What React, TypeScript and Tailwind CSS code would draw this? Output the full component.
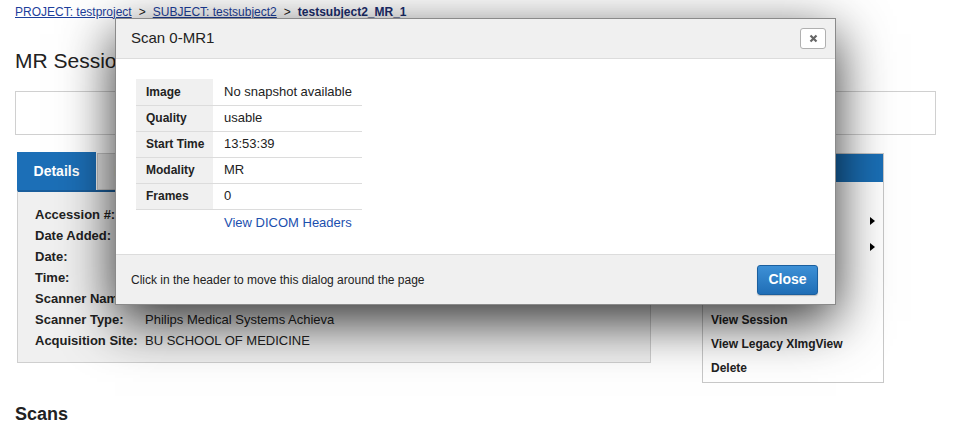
import React from 'react';

const font = { fontFamily: '"Liberation Sans", Arial, sans-serif' };

const scanRows: [string, string][] = [
  ['Image', 'No snapshot available'],
  ['Quality', 'usable'],
  ['Start Time', '13:53:39'],
  ['Modality', 'MR'],
  ['Frames', '0'],
];

const details: [string, string][] = [
  ['Accession #:', 'E00012'],
  ['Date Added:', '2019-05-02 13:53:39'],
  ['Date:', '2019-04-30'],
  ['Time:', '13:53:39'],
  ['Scanner Name:', 'MR1'],
  ['Scanner Type:', 'Philips Medical Systems Achieva'],
  ['Acquisition Site:', 'BU SCHOOL OF MEDICINE'],
];

function Arrow() {
  return (
    <svg width="5" height="8" viewBox="0 0 5 8" className="fill-black">
      <path d="M0 0 L5 4 L0 8 Z" />
    </svg>
  );
}

function ActionBox() {
  return (
    <div className="w-[182px] border border-[#c8c8c8] bg-white">
      <div className="h-[28px] bg-[#1a6fb6]" />
      <ul className="pb-[2px] text-[12px] font-bold text-[#222]">
        <li className="flex h-[26px] items-center justify-between px-[8px]">Actions</li>
        <li className="flex h-[26px] items-center justify-between px-[8px]">
          Edit <Arrow />
        </li>
        <li className="flex h-[26px] items-center justify-between px-[8px]">
          Download <Arrow />
        </li>
        <li className="flex h-[24px] items-center px-[8px]">Upload Images</li>
        <li className="flex h-[24px] items-center px-[8px]">Run Pipeline</li>
        <li className="flex h-[24px] items-center px-[8px]">View Session</li>
        <li className="flex h-[24px] items-center px-[8px]">View Legacy XImgView</li>
        <li className="flex h-[24px] items-center px-[8px]">Delete</li>
      </ul>
    </div>
  );
}

function ScanDialog() {
  return (
    <div className="absolute left-[115px] top-[18px] flex h-[287px] w-[721px] flex-col border border-[#8a8a8a] bg-white shadow-[0_16px_50px_rgba(0,0,0,0.8)]">
      <div className="flex h-[40px] items-center justify-between border-b border-[#dcdcdc] bg-[#f0f0f0] pl-[15px] pr-[9px]">
        <span className="text-[15px] text-[#222]">Scan 0-MR1</span>
        <button className="flex h-[21px] w-[26px] items-center justify-center rounded-[3px] border border-[#b0b0b0] bg-white">
          <svg width="9" height="9" viewBox="0 0 9 9">
            <path d="M1.5 1.5 L7.5 7.5 M7.5 1.5 L1.5 7.5" stroke="#666" strokeWidth="2.2" />
          </svg>
        </button>
      </div>
      <div className="flex-1 pl-[20px] pt-[20px]">
        <table className="w-[226px] border-collapse text-[13px] text-[#222]">
          <tbody>
            {scanRows.map(([k, v]) => (
              <tr key={k} className="h-[26px] border-b border-[#dcdcdc]">
                <td className="w-[77px] bg-[#f0f0f0] pl-[10px] text-[12px] font-bold">{k}</td>
                <td className="pl-[11px]">{v}</td>
              </tr>
            ))}
            <tr className="h-[26px]">
              <td />
              <td className="pl-[11px] text-[#1c4fae]">View DICOM Headers</td>
            </tr>
          </tbody>
        </table>
      </div>
      <div className="flex h-[50px] items-center justify-between border-t border-[#dcdcdc] bg-[#f0f0f0] pl-[15px] pr-[17px]">
        <span className="text-[12px] text-[#222]">Click in the header to move this dialog around the page</span>
        <button className="h-[30px] w-[61px] rounded-[3px] border border-[#1b5f9e] bg-gradient-to-b from-[#3d90d6] to-[#1f6eb6] text-[14px] font-bold text-white shadow-[0_1px_1px_rgba(0,0,0,0.2)]">
          Close
        </button>
      </div>
    </div>
  );
}

export default function App() {
  return (
    <div className="relative h-[425px] w-[954px] overflow-hidden bg-white text-[#222]" style={font}>
      <div className="px-[15px] pt-[3px]">
        <div className="flex h-[17px] items-center gap-[7px] text-[12px]">
          <span className="text-[#1d3f9c] underline">PROJECT: testproject</span>
          <span>&gt;</span>
          <span className="text-[#1d3f9c] underline">SUBJECT: testsubject2</span>
          <span>&gt;</span>
          <span className="font-bold text-[#1a2d6e]">testsubject2_MR_1</span>
        </div>
        <h1 className="mt-[29px] text-[21px] leading-[24px]">MR Session: testsubject2_MR_1</h1>
        <div className="mt-[18px] h-[44px] w-[921px] border border-[#d0d0d0]" />
        <div className="mt-[17px] flex">
          <div className="ml-[2px] w-[634px]">
            <div className="flex h-[38px] items-end">
              <div className="flex h-[38px] w-[79px] items-center justify-center bg-[#1c6fb7] text-[14px] font-bold text-white">
                Details
              </div>
              <div className="ml-[1px] flex h-[37px] w-[90px] items-center justify-center border border-[#c8c8c8] bg-[#e6e6e6] text-[14px] font-bold">
                Projects
              </div>
            </div>
            <div className="h-[173px] border border-t-2 border-[#cfcfcf] border-t-[#1a5e9c] bg-[#f0f0f0] pl-[17px] pt-[12px]">
              {details.map(([k, v]) => (
                <div key={k} className="flex h-[21px] items-center text-[13px]">
                  <span className="w-[110px] font-bold">{k}</span>
                  <span>{v}</span>
                </div>
              ))}
            </div>
          </div>
          <div className="ml-[51px] mt-[1px]">
            <ActionBox />
          </div>
        </div>
        <h2 className="mt-[17px] text-[18px] font-bold leading-[28px]">Scans</h2>
      </div>
      <ScanDialog />
    </div>
  );
}
